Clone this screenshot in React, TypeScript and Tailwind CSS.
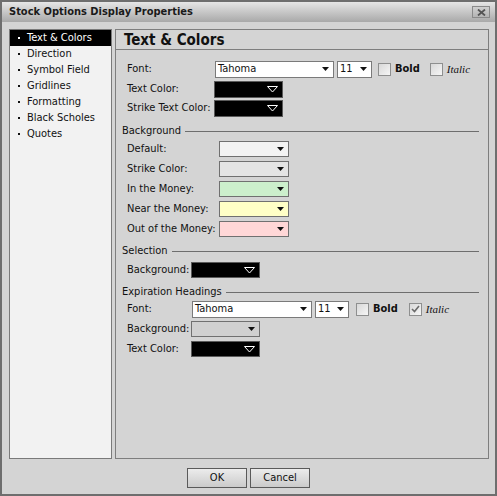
import React from "react";

const ui = { fontFamily: "Tahoma, 'DejaVu Sans Condensed', 'Liberation Sans', sans-serif" };

const menu = ["Text & Colors", "Direction", "Symbol Field", "Gridlines", "Formatting", "Black Scholes", "Quotes"];

function SolidArrow() {
    return (
        <svg width="7" height="4" viewBox="0 0 7 4">
            <polygon points="0,0 7,0 3.5,4" fill="#111" />
        </svg>
    );
}

function OutlineArrow() {
    return (
        <svg width="11" height="7" viewBox="0 0 11 7">
            <polygon points="0.5,0.5 10.5,0.5 5.5,6" fill="none" stroke="#fff" strokeWidth="1" />
        </svg>
    );
}

function Select({ value, width }: { value: string; width: string }) {
    return (
        <div className={`${width} h-[17px] bg-white border border-[#7a7a7a] flex items-center justify-between pl-[2px] pr-[4px] text-[11px] text-[#111]`}>
            <span>{value}</span>
            <SolidArrow />
        </div>
    );
}

function Swatch({ color, dark, width, height = "h-[16px]" }: { color: string; dark?: boolean; width: string; height?: string }) {
    return (
        <div className={`${width} ${height} ${color} border ${dark ? "border-[#5a5a5a]" : "border-[#707070]"} flex items-center justify-end pr-[4px]`}>
            {dark ? <OutlineArrow /> : <SolidArrow />}
        </div>
    );
}

function Check({ checked, label, italic }: { checked?: boolean; label: string; italic?: boolean }) {
    return (
        <div className="flex items-center gap-[4px]">
            <div className="w-[13px] h-[13px] border border-[#8e8f8f] bg-gradient-to-br from-[#d8d8d8] to-[#f6f6f6] flex items-center justify-center">
                {checked && (
                    <svg width="9" height="8" viewBox="0 0 9 8">
                        <polyline points="1,4 3.5,6.5 8,1" fill="none" stroke="#6a6a6a" strokeWidth="1.6" />
                    </svg>
                )}
            </div>
            {italic ? (
                <span className="text-[11px] italic text-[#111]" style={{ fontFamily: "'Liberation Serif', serif" }}>{label}</span>
            ) : (
                <span className="text-[11px] font-bold text-[#111]">{label}</span>
            )}
        </div>
    );
}

function Section({ title }: { title: string }) {
    return (
        <div className="flex items-center gap-[4px] pl-[6px] pr-[9px] h-full">
            <span className="text-[11px] text-[#111] whitespace-nowrap">{title}</span>
            <div className="flex-1 h-px bg-[#6e6e6e]" />
        </div>
    );
}

function Row({ label, labelW, h = "h-[20px]", children }: { label: string; labelW: string; h?: string; children: React.ReactNode }) {
    return (
        <div className={`flex items-center ${h} pl-[11px]`}>
            <span className={`${labelW} text-[11px] text-[#111] whitespace-nowrap`}>{label}</span>
            {children}
        </div>
    );
}

export default function App() {
    return (
        <div className="w-[497px] h-[496px] bg-[#d4d4d4] border-2 border-[#6e6e6e] flex flex-col select-none" style={ui}>
            {/* title bar */}
            <div className="h-[20px] bg-gradient-to-b from-[#e6e6e6] to-[#a9a9a9] flex items-center justify-between pl-[7px] pr-[5px]">
                <span className="text-[11px] font-bold text-[#1a1a1a]">Stock Options Display Properties</span>
                <div className="w-[18px] h-[12px] border border-[#8a8a8a] bg-gradient-to-b from-[#cfcfcf] to-[#b4b4b4] flex items-center justify-center">
                    <svg width="9" height="7" viewBox="0 0 9 7">
                        <path d="M1 0.5 L8 6.5 M8 0.5 L1 6.5" stroke="#555" strokeWidth="1.8" />
                    </svg>
                </div>
            </div>

            {/* body */}
            <div className="flex gap-[3px] pl-[7px] pr-[6px] pt-[7px] h-[437px]">
                <div className="w-[103px] h-full bg-[#f2f2f2] border border-[#7a7a7a]">
                    {menu.map((m, i) => (
                        <div key={m} className={`h-[16px] flex items-center pl-[8px] gap-[7px] text-[11px] ${i === 0 ? "bg-black text-white" : "text-[#111]"}`}>
                            <span className={`w-[2px] h-[2px] ${i === 0 ? "bg-white" : "bg-[#111]"}`} />
                            <span>{m}</span>
                        </div>
                    ))}
                </div>

                <div className="flex-1 h-full border border-[#7e7e7e] flex flex-col">
                    <div className="h-[19px] flex items-center pl-[8px] pt-[1px]">
                        <span className="text-[15px] font-bold text-[#111]">Text &amp; Colors</span>
                    </div>
                    <div className="h-px bg-[#7e7e7e]" />

                    <div className="pt-[9px] flex flex-col">
                        <Row label="Font:" labelW="w-[88px]">
                            <div className="flex items-center">
                                <Select value="Tahoma" width="w-[119px]" />
                                <div className="ml-[3px]"><Select value="11" width="w-[35px]" /></div>
                                <div className="ml-[6px]"><Check label="Bold" /></div>
                                <div className="ml-[10px]"><Check label="Italic" italic /></div>
                            </div>
                        </Row>
                        <Row label="Text Color:" labelW="w-[87px]">
                            <Swatch color="bg-black" dark width="w-[69px]" height="h-[17px]" />
                        </Row>
                        <Row label="Strike Text Color:" labelW="w-[87px]" h="h-[19px]">
                            <Swatch color="bg-black" dark width="w-[69px]" height="h-[17px]" />
                        </Row>

                        <div className="mt-[4px] h-[17px] pt-[2px]"><Section title="Background" /></div>
                        <Row label="Default:" labelW="w-[92px]">
                            <Swatch color="bg-[#f3f3f3]" width="w-[70px]" />
                        </Row>
                        <Row label="Strike Color:" labelW="w-[92px]">
                            <Swatch color="bg-[#e4e4e4]" width="w-[70px]" />
                        </Row>
                        <Row label="In the Money:" labelW="w-[92px]">
                            <Swatch color="bg-[#ccefcc]" width="w-[70px]" />
                        </Row>
                        <Row label="Near the Money:" labelW="w-[92px]">
                            <Swatch color="bg-[#ffffc6]" width="w-[70px]" />
                        </Row>
                        <Row label="Out of the Money:" labelW="w-[92px]">
                            <Swatch color="bg-[#ffd7d7]" width="w-[70px]" />
                        </Row>

                        <div className="mt-[3px] h-[18px] pt-[1px]"><Section title="Selection" /></div>
                        <Row label="Background:" labelW="w-[64px]">
                            <Swatch color="bg-black" dark width="w-[69px]" />
                        </Row>

                        <div className="mt-[3px] h-[16px] pt-[3px]"><Section title="Expiration Headings" /></div>
                        <Row label="Font:" labelW="w-[65px]">
                            <div className="flex items-center">
                                <Select value="Tahoma" width="w-[120px]" />
                                <div className="ml-[3px]"><Select value="11" width="w-[34px]" /></div>
                                <div className="ml-[7px]"><Check label="Bold" /></div>
                                <div className="ml-[11px]"><Check label="Italic" checked italic /></div>
                            </div>
                        </Row>
                        <Row label="Background:" labelW="w-[64px]">
                            <Swatch color="bg-[#d0d0d0]" width="w-[69px]" />
                        </Row>
                        <Row label="Text Color:" labelW="w-[64px]">
                            <Swatch color="bg-black" dark width="w-[69px]" />
                        </Row>
                    </div>
                </div>
            </div>

            {/* footer */}
            <div className="flex justify-center gap-[3px] pt-[9px]">
                {["OK", "Cancel"].map((b) => (
                    <div key={b} className="w-[60px] h-[20px] border border-[#5a5a5a] bg-gradient-to-b from-[#ececec] to-[#cbcbcb] flex items-center justify-center text-[11px] text-[#111]">
                        {b}
                    </div>
                ))}
            </div>
        </div>
    );
}
